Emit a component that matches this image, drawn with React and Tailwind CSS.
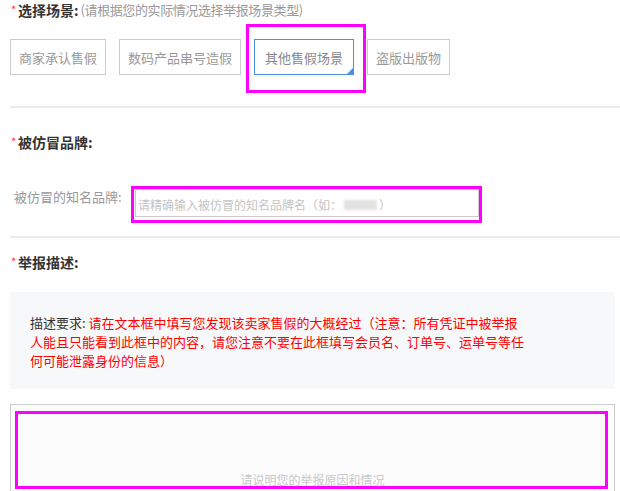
import React from 'react';

const scenes = ['商家承认售假', '数码产品串号造假', '其他售假场景', '盗版出版物'];

const Title = ({ children, extra }) => (
    <div className="flex items-center h-5 leading-5 whitespace-nowrap">
        <span className="text-[#f33] text-[11px] w-[8px] pl-[1px] mt-[-2px]">*</span>
        <span className="text-[14px] font-bold text-[#333]">{children}</span>
        {extra && <span className="text-[13px] tracking-[-0.4px] text-[#999] ml-[2px]">{extra}</span>}
    </div>
);

const App = () => {
    return (
        <div className="w-[620px] h-[491px] overflow-hidden bg-white font-['Noto_Sans_CJK_SC',sans-serif]">
            <div className="pl-[10px]">
                <Title extra="(请根据您的实际情况选择举报场景类型)">选择场景:</Title>

                <div className="flex gap-[13px] mt-[19px]">
                    {scenes.map((s, i) => (
                        <div key={s} className="relative">
                            <div
                                className={`h-[36px] flex items-center text-[13px] leading-none border ${i === 2 ? 'px-[10px] border-[#4a90e2] text-[#888]' : 'px-[8px] border-[#ccc] text-[#999]'}`}
                            >
                                {s}
                            </div>
                            {i === 2 && (
                                <>
                                    <span className="absolute right-0 bottom-0 w-0 h-0 border-l-[8px] border-l-transparent border-b-[8px] border-b-[#4a90e2]"></span>
                                    <span className="absolute left-[-8px] top-[-15px] right-[-12px] bottom-[-18px] border-[3px] border-[#f0f]"></span>
                                </>
                            )}
                        </div>
                    ))}
                </div>
            </div>

            <div className="ml-[10px] mt-[31px] h-[2px] bg-[#ebebeb]"></div>

            <div className="pl-[10px]">
                <div className="mt-[24px]">
                    <Title>被仿冒品牌:</Title>
                </div>

                <div className="flex items-start mt-[35px]">
                    <div className="w-[125px] pl-[4px] text-[13px] leading-5 text-[#999] whitespace-nowrap">被仿冒的知名品牌:</div>
                    <div className="relative mt-[2px]">
                        <div className="w-[344px] h-[28px] border border-[#ccc] pl-[2px] pt-[3px] text-[12px] leading-[16px] text-[#c4c4c4] whitespace-nowrap flex items-center">
                            <span>请精确输入被仿冒的知名品牌名（如：</span>
                            <span className="inline-block w-[33px] h-[10px] bg-[#e2e2e2] blur-[1px] mx-[2px]"></span>
                            <span>）</span>
                        </div>
                        <span className="absolute left-[-4px] top-[-3px] right-[-3px] bottom-[-6px] border-[3px] border-[#f0f]"></span>
                    </div>
                </div>
            </div>

            <div className="ml-[10px] mt-[19px] h-[2px] bg-[#ebebeb]"></div>

            <div className="pl-[10px] pr-[5px]">
                <div className="mt-[14px]">
                    <Title>举报描述:</Title>
                </div>

                <div className="mt-[20px] h-[97px] bg-[#f7f8fa] pl-[20px] pt-[21px]">
                    <p className="w-[498px] text-[13px] leading-[19px] text-[#f00]">
                        <span className="text-[#333]">描述要求: </span>
                        请在文本框中填写您发现该卖家售假的大概经过（注意：所有凭证中被举报人能且只能看到此框中的内容，请您注意不要在此框填写会员名、订单号、运单号等任何可能泄露身份的信息）
                    </p>
                </div>

                <div className="relative mt-[15px] h-[100px] border border-[#ccc] bg-[#fcfcfc]">
                    <div className="pt-[66px] text-center text-[12px] leading-[18px] text-[#c8c8c8]">请说明您的举报原因和情况</div>
                    <span className="absolute left-[4px] top-[6px] w-[593px] h-[78px] border-[3px] border-[#f0f]"></span>
                </div>
            </div>
        </div>
    );
};

export default App;
